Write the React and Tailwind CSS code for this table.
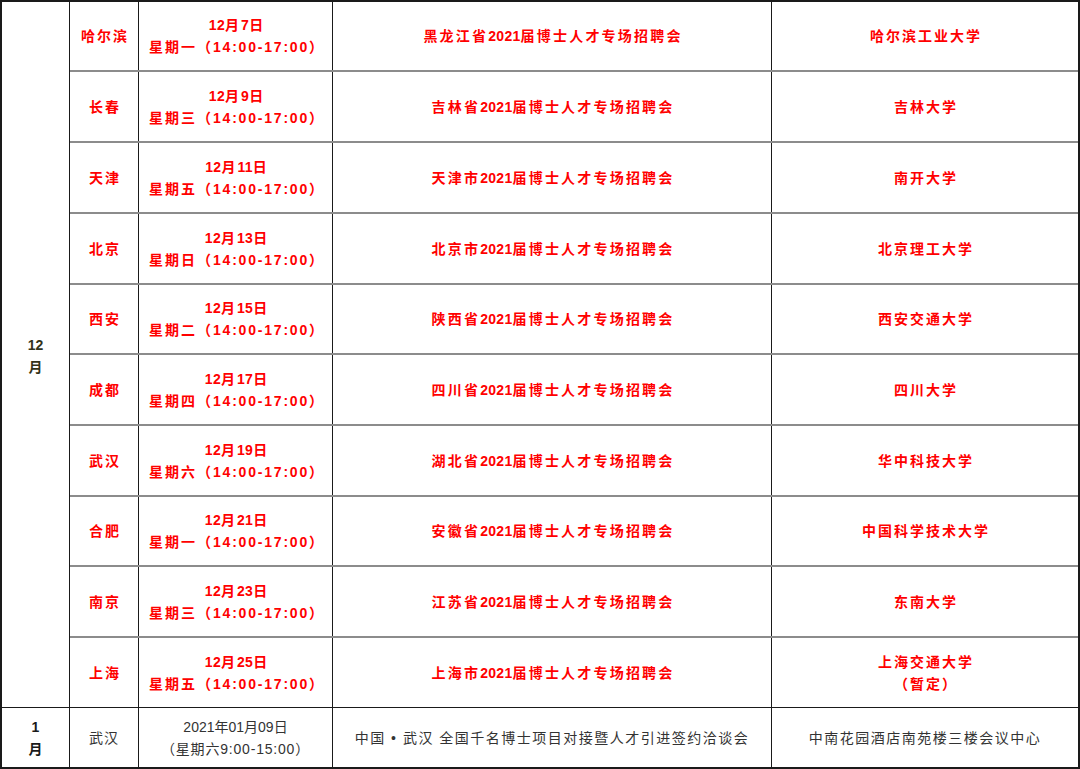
import React from "react";

const rows = [
  ["哈尔滨", "12月7日", "星期一", "黑龙江省", ["哈尔滨工业大学"]],
  ["长春", "12月9日", "星期三", "吉林省", ["吉林大学"]],
  ["天津", "12月11日", "星期五", "天津市", ["南开大学"]],
  ["北京", "12月13日", "星期日", "北京市", ["北京理工大学"]],
  ["西安", "12月15日", "星期二", "陕西省", ["西安交通大学"]],
  ["成都", "12月17日", "星期四", "四川省", ["四川大学"]],
  ["武汉", "12月19日", "星期六", "湖北省", ["华中科技大学"]],
  ["合肥", "12月21日", "星期一", "安徽省", ["中国科学技术大学"]],
  ["南京", "12月23日", "星期三", "江苏省", ["东南大学"]],
  ["上海", "12月25日", "星期五", "上海市", ["上海交通大学", "（暂定）"]],
];

const heights = [
  "h-[70px] border-b-2",
  "h-[71px] border-b-2",
  "h-[71px] border-b-2",
  "h-[71px] border-b-2",
  "h-[70px] border-b-2",
  "h-[71px] border-b-2",
  "h-[71px] border-b-2",
  "h-[70px] border-b-2",
  "h-[71px] border-b-2",
  "h-[69px]",
];

function T({ s, ascii = "tracking-[0.3px]" }) {
  const parts = s.split(/([\x00-\x7f]+)/).filter(Boolean);
  return (
    <>
      {parts.map((p, i) =>
        /^[\x00-\x7f]+$/.test(p) ? (
          <span key={i} className={ascii}>
            {p}
          </span>
        ) : (
          <span key={i}>{p}</span>
        )
      )}
    </>
  );
}

export default function App() {
  return (
    <div className="w-[1080px] h-[769px] bg-white border-2 border-[#1a1a1a] font-['Liberation_Sans','Noto_Sans_CJK_SC',sans-serif] text-[14px] leading-[22px]">
      <div className="flex h-[705px]">
        <div className="w-[68px] border-r border-[#1a1a1a] flex flex-col items-center justify-center font-bold text-[#33331a] pt-[3px]">
          <span>12</span>
          <span>月</span>
        </div>
        <div className="flex-1 flex flex-col">
          {rows.map((r, i) => (
            <div
              key={i}
              className={`grid grid-cols-[69px_194px_439px_1fr] border-[#8c8c8c] text-[#ff0000] font-bold tracking-[2px] ${heights[i]}`}
            >
              <div className="border-r border-[#1a1a1a] flex items-center justify-center pl-[2px]">
                {r[0]}
              </div>
              <div className="border-r border-[#1a1a1a] flex flex-col items-center justify-center pl-[3px]">
                <span>
                  <T s={r[1]} />
                </span>
                <span className="tracking-[2px]">
                  {r[2]}（<span className="tracking-[1.8px]">14:00-17:00</span>）
                </span>
              </div>
              <div className="border-r border-[#1a1a1a] flex items-center justify-center pl-[2px]">
                <span className="tracking-[2.2px]">
                  <T s={`${r[3]}2021届博士人才专场招聘会`} />
                </span>
              </div>
              <div className="flex flex-col items-center justify-center pl-[2px]">
                {r[4].map((t, j) => (
                  <span key={j}>{t}</span>
                ))}
              </div>
            </div>
          ))}
        </div>
      </div>
      <div className="grid grid-cols-[68px_69px_194px_439px_1fr] h-[60px] border-t border-[#1a1a1a] text-[#333333]">
        <div className="border-r border-[#1a1a1a] flex flex-col items-center justify-center font-bold text-[#1a1a1a]">
          <span>1</span>
          <span>月</span>
        </div>
        <div className="border-r border-[#1a1a1a] flex items-center justify-center tracking-[1px]">
          武汉
        </div>
        <div className="border-r border-[#1a1a1a] flex flex-col items-center justify-center">
          <span>2021年01月09日</span>
          <span className="tracking-[0.8px]">（星期六9:00-15:00）</span>
        </div>
        <div className="border-r border-[#1a1a1a] flex items-center justify-center tracking-[1.5px]">
          中国 • 武汉 全国千名博士项目对接暨人才引进签约洽谈会
        </div>
        <div className="flex items-center justify-center tracking-[1.5px]">
          中南花园酒店南苑楼三楼会议中心
        </div>
      </div>
    </div>
  );
}
